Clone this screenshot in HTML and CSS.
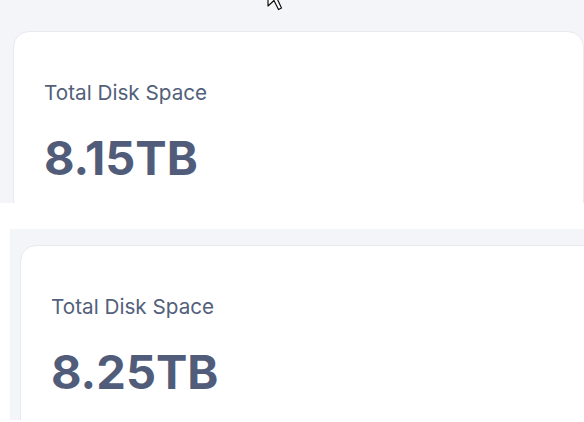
FILE: index.html
```html
<!DOCTYPE html>
<html lang="en">
<head>
    <meta charset="UTF-8">
    <meta name="viewport" content="width=device-width, initial-scale=1.0">
    <link rel="stylesheet" href="styles.css">
</head>
<body>
    <div class="shot shot-first">
        <div class="stat-card">
            <div class="stat-label">Total Disk Space</div>
            <div class="stat-value">8.15TB</div>
        </div>
        <svg class="cursor" width="20" height="30" viewBox="0 0 20 30">
            <path d="M1 1 L1 25 L7 19.5 L11.5 28.5 L14.5 27 L10.5 18.5 L18 18.5 Z" fill="#fff" stroke="#111" stroke-width="1.2" stroke-linejoin="round"/>
        </svg>
    </div>

    <div class="shot shot-second">
        <div class="stat-card">
            <div class="stat-label">Total Disk Space</div>
            <div class="stat-value">8.25TB</div>
        </div>
    </div>
</body>
</html>
```

FILE: styles.css
```css
body {
    margin: 0;
    background: #ffffff;
    font-family: 'Inter', 'Noto Sans', sans-serif;
    overflow: hidden;
}

.shot {
    background: #f4f5f8;
    overflow: hidden;
    position: relative;
    box-sizing: border-box;
}

.shot-first {
    height: 203px;
    padding: 31px 0 0 13px;
}

.shot-second {
    height: 191px;
    margin: 26px 0 0 10px;
    padding: 16px 0 0 10px;
}

.stat-card {
    background: #ffffff;
    border: 1px solid #e7e9ee;
    border-radius: 16px;
    padding: 48px 30px 40px;
    height: 260px;
}

.shot-first .stat-card {
    width: 571px;
    box-sizing: border-box;
}

.shot-second .stat-card {
    width: 600px;
    box-sizing: border-box;
}

.stat-label {
    font-size: 20.7px;
    line-height: 25px;
    color: #535f7b;
    margin-bottom: 25px;
}

.stat-value {
    font-size: 47px;
    line-height: 56px;
    font-weight: 700;
    color: #505c79;
}

.cursor {
    position: absolute;
    left: 267px;
    top: -19px;
}
```
